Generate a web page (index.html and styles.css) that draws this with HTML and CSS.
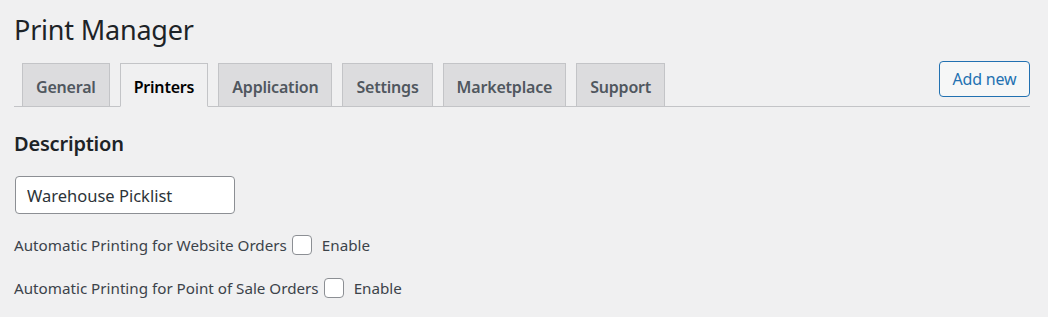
FILE: index.html
```html
<!DOCTYPE html>
<html>
<head>
<meta charset="utf-8">
<link rel="stylesheet" href="styles.css">
</head>
<body>
<div class="wrap">
  <h1 class="title">Print Manager</h1>
  <div class="tabbar">
    <nav class="tabs">
      <a class="tab">General</a>
      <a class="tab active">Printers</a>
      <a class="tab">Application</a>
      <a class="tab">Settings</a>
      <a class="tab">Marketplace</a>
      <a class="tab">Support</a>
    </nav>
    <button class="btn">Add new</button>
  </div>
  <h2 class="heading">Description</h2>
  <input class="field" type="text" value="Warehouse Picklist">
  <div class="row first"><span class="label">Automatic Printing for Website Orders</span><span class="check"></span><span class="enable">Enable</span></div>
  <div class="row"><span class="label">Automatic Printing for Point of Sale Orders</span><span class="check"></span><span class="enable">Enable</span></div>
</div>
</body>
</html>
```
FILE: styles.css
```css
html, body {
  margin: 0;
  padding: 0;
  background: #f0f0f1;
}
body {
  font-family: "Noto Sans", "Open Sans", sans-serif;
  color: #3c434a;
  font-size: 15px;
}
.wrap {
  padding: 0 18px 0 14px;
}
.title {
  margin: 0;
  padding-top: 11px;
  font-size: 27px;
  font-weight: 400;
  line-height: 38px;
  color: #1d2327;
  letter-spacing: -0.2px;
}
.tabbar {
  margin-top: 14px;
  display: flex;
  justify-content: space-between;
  align-items: flex-start;
  border-bottom: 1px solid #c3c4c7;
}
.tabs {
  display: flex;
  padding-left: 8px;
}
.tab {
  display: block;
  margin-left: 10px;
  margin-bottom: -1px;
  height: 43px;
  box-sizing: border-box;
  padding: 3px 13px 0;
  line-height: 40px;
  font-size: 16px;
  font-weight: 600;
  color: #50575e;
  background: #dcdcde;
  border: 1px solid #c3c4c7;
  border-bottom: none;
  letter-spacing: -0.2px;
}
.tab:first-child {
  margin-left: 0;
}
.tab.active {
  background: #f0f0f1;
  color: #000;
  height: 44px;
  border-bottom: 1px solid #f0f0f1;
}
.btn {
  margin-top: -2px;
  width: 91px;
  height: 36px;
  box-sizing: border-box;
  border: 1px solid #2271b1;
  border-radius: 4px;
  background: #f6f7f7;
  color: #2271b1;
  font-family: inherit;
  font-size: 16px;
  padding: 0;
  letter-spacing: -0.2px;
}
.heading {
  margin: 24px 0 0;
  font-size: 20px;
  font-weight: 600;
  line-height: 26px;
  color: #1d2327;
  letter-spacing: -0.2px;
}
.field {
  display: block;
  margin: 19px 0 0 1px;
  width: 220px;
  height: 38px;
  box-sizing: border-box;
  border: 1px solid #8c8f94;
  border-radius: 4px;
  background: #fff;
  padding: 0 11px;
  font-family: inherit;
  font-size: 16.5px;
  color: #2c3338;
}
.row {
  display: flex;
  align-items: center;
  height: 20px;
  margin-top: 23px;
  font-size: 15.2px;
}
.row.first {
  margin-top: 21px;
}
.check {
  width: 20px;
  height: 20px;
  box-sizing: border-box;
  border: 1px solid #8c8f94;
  border-radius: 4px;
  background: #fff;
  margin-left: 5px;
}
.enable {
  margin-left: 10px;
}
```
